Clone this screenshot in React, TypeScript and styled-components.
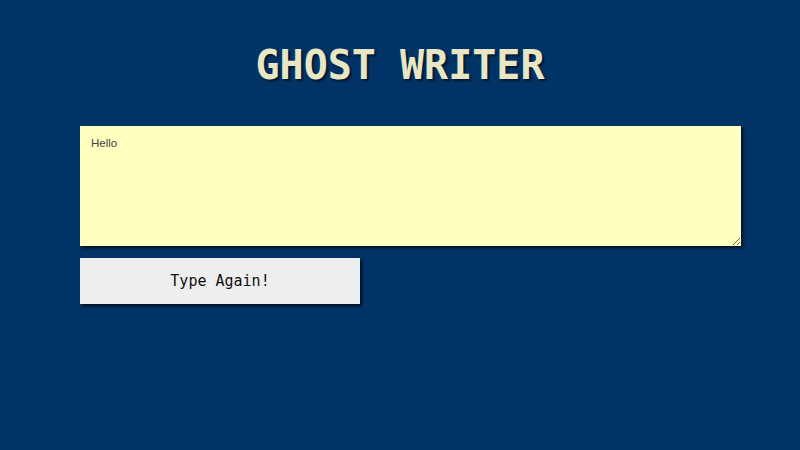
import React, { useState } from 'react'
import styled, { createGlobalStyle } from 'styled-components'

const GlobalStyle = createGlobalStyle`
  html, body {
    margin: 0;
    padding: 0;
    background: #023366;
  }
`

const Page = styled.div`
  min-height: 450px;
  padding: 0 80px;
  box-sizing: border-box;
  display: flex;
  flex-direction: column;
  align-items: flex-start;
`

const Title = styled.h1`
  align-self: stretch;
  margin: 42px 0 38px;
  text-align: center;
  font-family: 'DejaVu Sans Mono', monospace;
  font-weight: bold;
  font-size: 40px;
  line-height: 46px;
  color: #e9e6c6;
  text-shadow: 2px 2px 2px rgba(0, 0, 0, 0.55);
`

const Editor = styled.textarea`
  width: 100%;
  height: 100px;
  padding: 11px 10px 9px 11px;
  margin: 0;
  border: none;
  background: #ffffc0;
  color: #444;
  font-family: 'Liberation Sans', Arial, sans-serif;
  font-size: 11.5px;
  box-shadow: 2px 2px 3px rgba(0, 0, 0, 0.7);
  outline: none;
  resize: vertical;
`

const Button = styled.button`
  margin-top: 12px;
  width: 280px;
  height: 46px;
  border: none;
  background: #eeeeee;
  color: #111;
  font-family: 'DejaVu Sans Mono', monospace;
  font-size: 15px;
  box-shadow: 2px 2px 3px rgba(0, 0, 0, 0.7);
  cursor: pointer;
`

const App: React.FC = () => {
  const [text, setText] = useState('Hello')

  return (
    <>
      <GlobalStyle />
      <Page>
        <Title>GHOST WRITER</Title>
        <Editor value={text} onChange={(e) => setText(e.target.value)} />
        <Button onClick={() => setText('')}>Type Again!</Button>
      </Page>
    </>
  )
}

export default App
